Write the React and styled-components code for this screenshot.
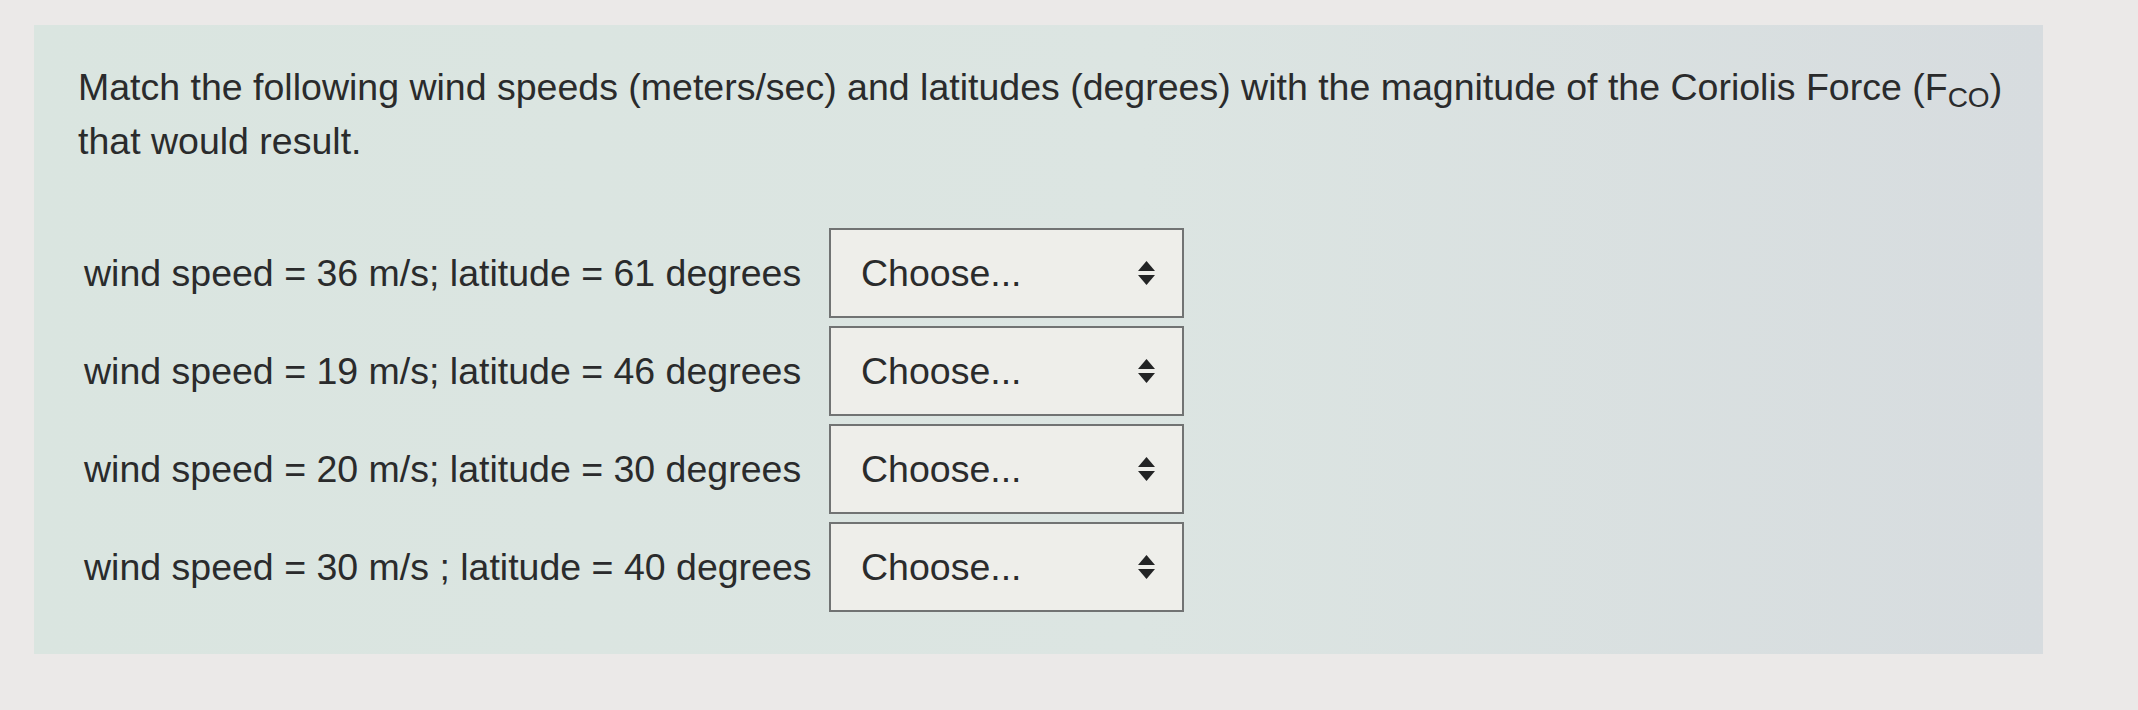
import styled, { createGlobalStyle } from "styled-components";

const GlobalStyle = createGlobalStyle`
  html, body {
    margin: 0;
    padding: 0;
    background: #ebe9e8;
  }
  body {
    font-family: "Liberation Sans", Arial, Helvetica, sans-serif;
    color: #2a2b2c;
  }
`;

const Page = styled.div`
  width: 2138px;
  height: 710px;
  padding: 25px 95px 0 34px;
  box-sizing: border-box;
`;

const Panel = styled.div`
  background: linear-gradient(90deg, #dae5e0 0%, #dce5e2 55%, #d7dcdf 100%);
  padding: 35px 20px 44px 44px;
  height: 629px;
  box-sizing: border-box;
`;

const Question = styled.p`
  margin: 0;
  font-size: 37.5px;
  line-height: 54px;
  white-space: nowrap;
  color: #2a2b2c;
`;

const Sub = styled.sub`
  font-size: 28px;
  vertical-align: -7px;
  line-height: 0;
`;

const Rows = styled.div`
  display: grid;
  grid-template-columns: 745px 355px;
  row-gap: 8px;
  margin-top: 60px;
  padding-left: 6px;
`;

const Label = styled.div`
  display: flex;
  align-items: center;
  height: 90px;
  font-size: 37.5px;
  white-space: nowrap;
  color: #2a2b2c;
`;

const Select = styled.div`
  display: flex;
  align-items: center;
  justify-content: space-between;
  height: 90px;
  box-sizing: border-box;
  border: 2px solid #717373;
  background: #eeeeea;
  padding: 0 26px 0 30px;
  font-size: 37.5px;
  color: #2a2b2c;
`;

const Arrows = styled.svg`
  width: 19px;
  height: 26px;
  flex: none;
`;

const rows = [
  "wind speed = 36 m/s; latitude = 61 degrees",
  "wind speed = 19 m/s; latitude = 46 degrees",
  "wind speed = 20 m/s; latitude = 30 degrees",
  "wind speed = 30 m/s ; latitude = 40 degrees",
];

const SortIcon = () => (
  <Arrows viewBox="0 0 19 26">
    <path d="M9.5 1 L18 11 L1 11 Z" fill="#232425" />
    <path d="M9.5 25 L18 15 L1 15 Z" fill="#232425" />
  </Arrows>
);

export default function App() {
  return (
    <>
      <GlobalStyle />
      <Page>
        <Panel>
          <Question>
            Match the following wind speeds (meters/sec) and latitudes (degrees) with the magnitude of the Coriolis Force (F<Sub>CO</Sub>)
            <br />
            that would result.
          </Question>
          <Rows>
            {rows.map((text) => (
              <>
                <Label key={text}>{text}</Label>
                <Select key={text + "-s"}>
                  <span>Choose...</span>
                  <SortIcon />
                </Select>
              </>
            ))}
          </Rows>
        </Panel>
      </Page>
    </>
  );
}
